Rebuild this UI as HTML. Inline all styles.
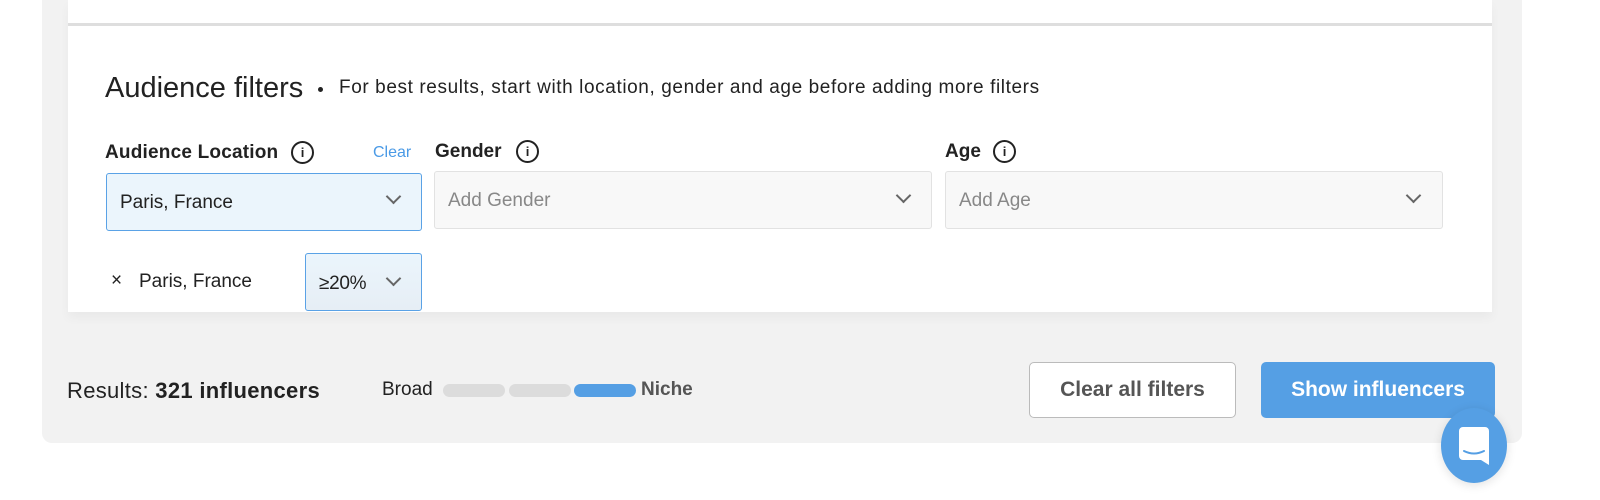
<!DOCTYPE html>
<html><head><style>
*{margin:0;padding:0;box-sizing:border-box}
body{width:1600px;height:500px;background:#fff;font-family:"Liberation Sans",sans-serif;color:#222;position:relative;overflow:hidden}
.a{position:absolute;white-space:nowrap}
.info{position:absolute;width:23px;height:23px;border:2px solid #222;border-radius:50%;font-size:13px;font-weight:bold;text-align:center;line-height:19px}
.chev{position:absolute;width:11px;height:11px;border-right:2px solid #666;border-bottom:2px solid #666;transform:rotate(45deg)}
.box{position:absolute;border:1px solid #e2e2e2;background:#f8f8f8;border-radius:3px}
</style></head><body>
<div class="a" style="left:42px;top:0;width:1480px;height:443px;background:#f2f2f2;border-radius:0 0 10px 10px"></div>
<div class="a" style="left:68px;top:0;width:1424px;height:312px;background:#fff;box-shadow:0 6px 10px rgba(0,0,0,0.04)"></div>
<div class="a" style="left:68px;top:23px;width:1424px;height:3px;background:#dedede"></div>

<div class="a" style="left:105px;top:72px;font-size:29px;color:#222;letter-spacing:0px">Audience filters</div>
<div class="a" style="left:318px;top:87px;width:5px;height:5px;border-radius:50%;background:#222"></div>
<div class="a" style="left:339px;top:77px;font-size:19px;letter-spacing:0.6px">For best results, start with location, gender and age before adding more filters</div>

<div class="a" style="left:105px;top:142px;font-size:19px;font-weight:bold;letter-spacing:0.2px">Audience Location</div>
<div class="info" style="left:291px;top:141px">i</div>
<div class="a" style="left:373px;top:144px;font-size:16px;color:#4a9ae6">Clear</div>
<div class="a" style="left:435px;top:141px;font-size:19px;font-weight:bold">Gender</div>
<div class="info" style="left:516px;top:140px">i</div>
<div class="a" style="left:945px;top:141px;font-size:19px;font-weight:bold">Age</div>
<div class="info" style="left:993px;top:140px">i</div>

<div class="box" style="left:106px;top:173px;width:316px;height:58px;background:#ebf5fc;border:1px solid #5aa2e6"></div>
<div class="a" style="left:120px;top:192px;font-size:19px">Paris, France</div>
<div class="chev" style="left:388px;top:191px"></div>
<div class="box" style="left:434px;top:171px;width:498px;height:58px"></div>
<div class="a" style="left:448px;top:190px;font-size:19px;color:#888">Add Gender</div>
<div class="chev" style="left:898px;top:190px"></div>
<div class="box" style="left:945px;top:171px;width:498px;height:58px"></div>
<div class="a" style="left:959px;top:190px;font-size:19px;color:#888">Add Age</div>
<div class="chev" style="left:1408px;top:190px"></div>

<div class="a" style="left:111px;top:270px;font-size:19px">×</div>
<div class="a" style="left:139px;top:271px;font-size:19px">Paris, France</div>
<div class="box" style="left:305px;top:253px;width:117px;height:58px;background:linear-gradient(#ebf5fc,#e6eef5);border:1px solid #5aa2e6"></div>
<div class="a" style="left:319px;top:273px;font-size:19px;letter-spacing:-0.3px">≥20%</div>
<div class="chev" style="left:388px;top:273px"></div>

<div class="a" style="left:67px;top:378px;font-size:22px;letter-spacing:0.3px">Results: <b>321 influencers</b></div>
<div class="a" style="left:382px;top:379px;font-size:19px">Broad</div>
<div class="a" style="left:443px;top:384px;width:62px;height:13px;border-radius:7px;background:#dcdcdc"></div>
<div class="a" style="left:509px;top:384px;width:62px;height:13px;border-radius:7px;background:#dcdcdc"></div>
<div class="a" style="left:574px;top:384px;width:62px;height:13px;border-radius:7px;background:#559fe4"></div>
<div class="a" style="left:641px;top:379px;font-size:19px;font-weight:bold;color:#555">Niche</div>

<div class="a" style="left:1029px;top:362px;width:207px;height:56px;border:1.5px solid #bbb;border-radius:5px;background:#fff;font-size:21px;font-weight:bold;color:#555;text-align:center;line-height:53px">Clear all filters</div>
<div class="a" style="left:1261px;top:362px;width:234px;height:56px;border-radius:5px;background:#559fe4;font-size:21px;font-weight:bold;color:#fff;text-align:center;line-height:56px">Show influencers</div>

<div class="a" style="left:1441px;top:408px;width:66px;height:75px;border-radius:50%;background:#559fe4;box-shadow:0 2px 10px rgba(0,0,0,0.12)"></div>
<svg class="a" style="left:1459px;top:427px" width="31" height="39" viewBox="0 0 31 39">
<path d="M4 0H26a4 4 0 0 1 4 4V38L22 33H4a4 4 0 0 1-4-4V4a4 4 0 0 1 4-4z" fill="#fff"/>
<path d="M5 24q10 5 20 0" stroke="#559fe4" stroke-width="2" fill="none" stroke-linecap="round"/>
</svg>
</body></html>
